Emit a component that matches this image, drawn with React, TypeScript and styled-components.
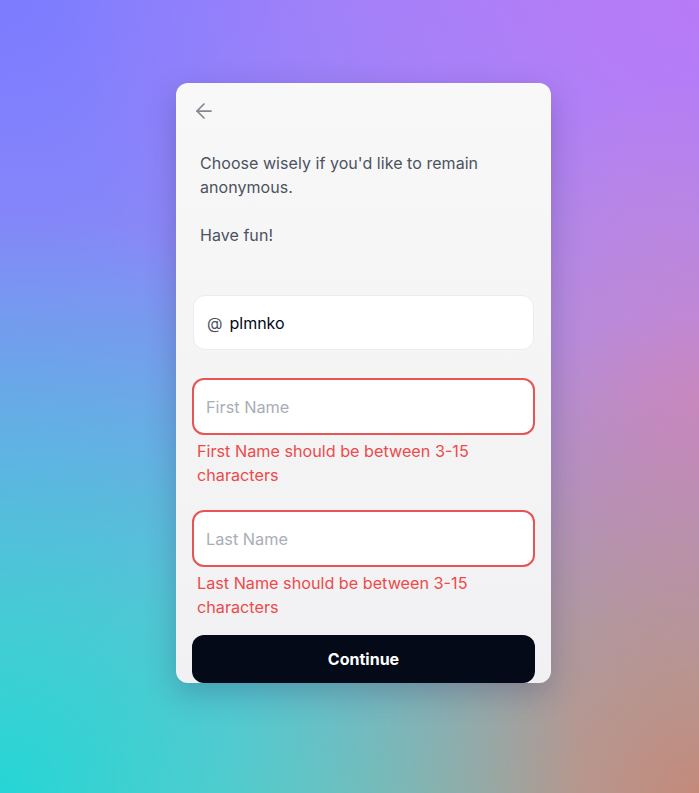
import React, { useState } from "react";
import styled, { createGlobalStyle } from "styled-components";
import { ArrowLeft } from "lucide-react";

const GlobalStyle = createGlobalStyle`
    html, body {
        margin: 0;
        padding: 0;
    }
    body {
        font-family: Inter, "Noto Sans", sans-serif;
    }
    * {
        box-sizing: border-box;
    }
`

const Page = styled.div`
    width: 100%;
    min-height: 793px;
    display: flex;
    justify-content: center;
    align-items: flex-start;
    padding-top: 83px;
    padding-left: 28px;
    background:
        radial-gradient(circle at 0% 100%, #26d6d6 0%, rgba(38, 214, 214, 0) 55%),
        radial-gradient(circle at 100% 100%, #c48a7c 0%, rgba(196, 138, 124, 0) 45%),
        radial-gradient(ellipse 45% 40% at 100% 50%, rgba(206, 134, 200, 0.9) 0%, rgba(206, 134, 200, 0) 100%),
        radial-gradient(circle at 100% 0%, #b87af7 0%, rgba(184, 122, 247, 0) 60%),
        radial-gradient(circle at 0% 0%, #7c7cff 0%, rgba(124, 124, 255, 0) 60%),
        linear-gradient(180deg, #a08cf8 0%, #8aa6e4 55%, #8fbcc0 100%);
`

const Card = styled.div`
    width: 375px;
    height: 600px;
    overflow: hidden;
    border-radius: 12px;
    background: linear-gradient(180deg, #f8f8f8 0%, #f1f1f3 100%);
    box-shadow: 0 10px 30px rgba(40, 30, 80, 0.25);
    padding: 16px 16px 0 16px;
    display: flex;
    flex-direction: column;
`

const BackButton = styled.button`
    width: 24px;
    height: 24px;
    padding: 0;
    border: none;
    background: transparent;
    color: #868693;
    cursor: pointer;
    display: flex;
    align-items: center;
    justify-content: center;
`

const Intro = styled.p`
    margin: 28px 0 0 8px;
    font-size: 16px;
    letter-spacing: 0.05px;
    line-height: 24px;
    color: #4b5260;
    white-space: pre-line;
`

const UserBox = styled.div`
    margin-top: 48px;
    margin-left: 1px;
    margin-right: 1px;
    height: 55px;
    border-radius: 12px;
    background: #ffffff;
    border: 1px solid #ececef;
    display: flex;
    align-items: center;
    gap: 7px;
    padding: 0 13px;
    font-size: 16px;
`

const At = styled.span`
    color: #4b5260;
`

const Handle = styled.span`
    color: #030818;
    font-weight: 400;
`

const Field = styled.div<{ first?: boolean }>`
    margin-top: ${({ first }) => (first ? "28px" : "23px")};
    display: flex;
    flex-direction: column;
`

const Input = styled.input<{ invalid?: boolean }>`
    height: 57px;
    width: 100%;
    border-radius: 12px;
    border: 2px solid ${({ invalid }) => (invalid ? "#e85353" : "#e5e7eb")};
    background: #ffffff;
    padding: 0 12px;
    font-family: Inter, "Noto Sans", sans-serif;
    font-size: 16.3px;
    color: #111827;
    outline: none;

    &::placeholder {
        color: #a9adb7;
    }
`

const ErrorText = styled.div`
    margin: 4px 0 0 5px;
    font-size: 16.2px;
    line-height: 24px;
    color: #ec4b4b;
    padding-right: 60px;
`

const ContinueButton = styled.button`
    margin-top: 16px;
    height: 48px;
    width: 100%;
    flex-shrink: 0;
    border: none;
    border-radius: 12px;
    background: #040a18;
    color: #ffffff;
    font-family: Inter, "Noto Sans", sans-serif;
    font-size: 16px;
    font-weight: 700;
    cursor: pointer;
`

const App: React.FC = () => {
    const [firstName, setFirstName] = useState("");
    const [lastName, setLastName] = useState("");

    return (
        <>
            <GlobalStyle />
            <Page>
                <Card>
                    <BackButton aria-label="Back">
                        <ArrowLeft size={24} strokeWidth={1.75} />
                    </BackButton>
                    <Intro>{"Choose wisely if you'd like to remain anonymous.\n\nHave fun!"}</Intro>
                    <UserBox>
                        <At>@</At>
                        <Handle>plmnko</Handle>
                    </UserBox>
                    <Field first>
                        <Input
                            invalid
                            placeholder="First Name"
                            value={firstName}
                            onChange={(e) => setFirstName(e.target.value)}
                        />
                        <ErrorText>First Name should be between 3-15 characters</ErrorText>
                    </Field>
                    <Field>
                        <Input
                            invalid
                            placeholder="Last Name"
                            value={lastName}
                            onChange={(e) => setLastName(e.target.value)}
                        />
                        <ErrorText>Last Name should be between 3-15 characters</ErrorText>
                    </Field>
                    <ContinueButton>Continue</ContinueButton>
                </Card>
            </Page>
        </>
    );
};

export default App;
